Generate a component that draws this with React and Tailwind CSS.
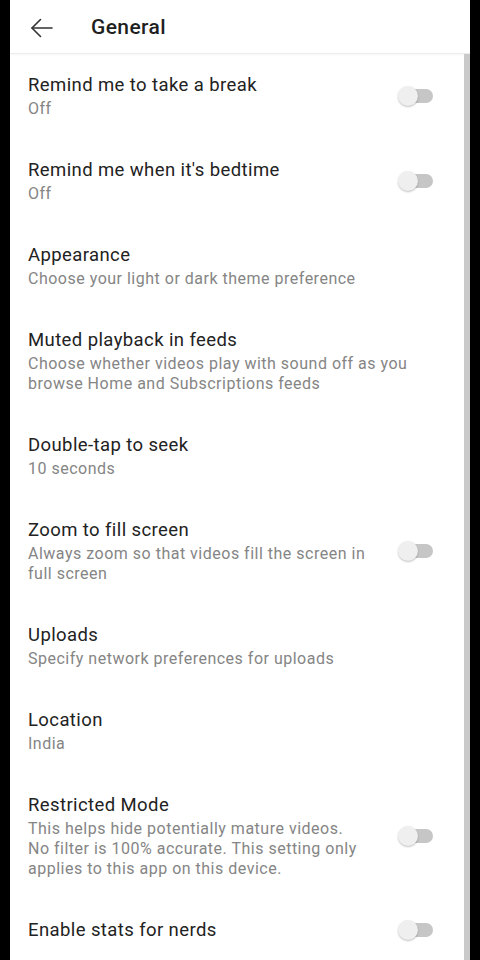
import React from 'react';

const settings = [
  { title: 'Remind me to take a break', sub: ['Off'], toggle: true },
  { title: "Remind me when it's bedtime", sub: ['Off'], toggle: true },
  { title: 'Appearance', sub: ['Choose your light or dark theme preference'] },
  {
    title: 'Muted playback in feeds',
    sub: ['Choose whether videos play with sound off as you', 'browse Home and Subscriptions feeds'],
  },
  { title: 'Double-tap to seek', sub: ['10 seconds'] },
  {
    title: 'Zoom to fill screen',
    sub: ['Always zoom so that videos fill the screen in', 'full screen'],
    toggle: true,
  },
  { title: 'Uploads', sub: ['Specify network preferences for uploads'] },
  { title: 'Location', sub: ['India'] },
  {
    title: 'Restricted Mode',
    sub: [
      'This helps hide potentially mature videos.',
      'No filter is 100% accurate. This setting only',
      'applies to this app on this device.',
    ],
    toggle: true,
  },
  { title: 'Enable stats for nerds', sub: [], toggle: true },
];

// Off-state switch: grey track with a pale knob on the left
const Toggle = () => (
  <div className="relative w-[36px] h-[20px] flex items-center">
    <div className="absolute left-[6px] w-[29px] h-[14px] rounded-full bg-[#c6c6c6]" />
    <div className="absolute left-0 w-[20px] h-[20px] rounded-full bg-[#efefef] shadow-[0_1px_2px_rgba(0,0,0,0.25)]" />
  </div>
);

const SettingRow = ({ item }) => (
  <div className="flex items-center pl-[18px] pr-[30px] pt-[19px] pb-[20px]">
    <div className="flex-1">
      <div className="text-[18.5px] leading-6 tracking-[0.4px] text-[#222222]">{item.title}</div>
      {item.sub.length > 0 && (
        <div className="mt-[2px]">
          {item.sub.map((line) => (
            <div key={line} className="text-[16px] leading-5 tracking-[0.5px] text-[#858585] whitespace-nowrap">
              {line}
            </div>
          ))}
        </div>
      )}
    </div>
    {item.toggle && <Toggle />}
  </div>
);

export default function App() {
  return (
    <div
      className="w-[480px] h-[960px] bg-black px-[10px] overflow-hidden"
      style={{ fontFamily: 'Roboto, "Noto Sans", sans-serif' }}
    >
      <div className="h-full bg-white flex flex-col">
        {/* Header */}
        <div className="h-[54px] shrink-0 pt-[3px] flex items-center border-b border-[#ececec] shadow-[0_1px_2px_rgba(0,0,0,0.04)]">
          <svg width="24" height="24" viewBox="0 0 24 24" className="ml-[20px]" fill="none" stroke="#333" strokeWidth="1.6" strokeLinecap="round" strokeLinejoin="round">
            <path d="M22 12H2" />
            <path d="M10.5 3.5L2 12l8.5 8.5" />
          </svg>
          <span className="ml-[37px] text-[21px] tracking-[0.4px] font-medium text-[#1f1f1f]">General</span>
        </div>
        {/* Body */}
        <div className="flex flex-1 min-h-0">
          <div className="flex-1 overflow-hidden">
            {settings.map((item) => (
              <SettingRow key={item.title} item={item} />
            ))}
          </div>
          <div className="w-[6px] bg-[#c9c9c9]" />
        </div>
      </div>
    </div>
  );
}
